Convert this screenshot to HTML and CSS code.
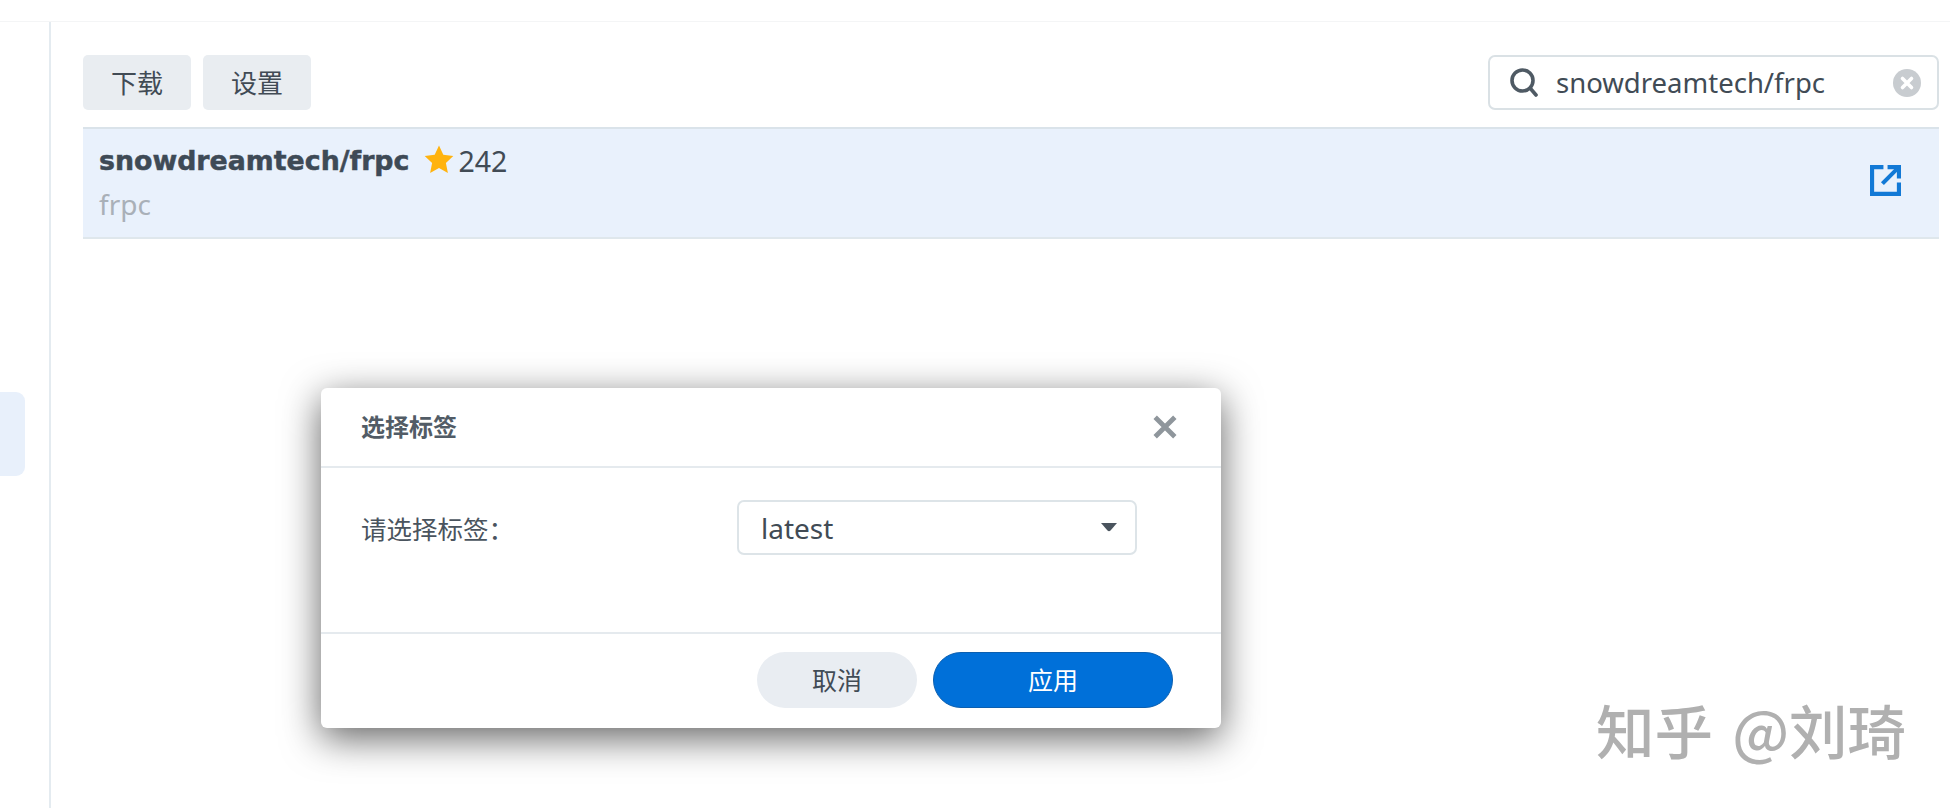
FILE: index.html
```html
<!DOCTYPE html>
<html lang="zh">
<head>
<meta charset="utf-8">
<title>Docker 注册表</title>
<link rel="stylesheet" href="styles.css">
</head>
<body>
<div class="page">
  <div class="topbar"></div>
  <div class="main">
    <aside class="sidebar"><div class="side-tab"></div></aside>
    <section class="content">
      <div class="toolbar">
        <button class="btn">下载</button>
        <button class="btn">设置</button>
        <div class="search">
          <svg class="search-icon" viewBox="0 0 28 30" width="28" height="30"><circle cx="12.5" cy="12.5" r="10.5" fill="none" stroke="#4f5a64" stroke-width="3.6"/><path d="M20 20l6 7" stroke="#4f5a64" stroke-width="3.6" stroke-linecap="round"/></svg>
          <span class="search-text">snowdreamtech/frpc</span>
          <svg class="clear-icon" viewBox="0 0 28 28" width="28" height="28"><circle cx="14" cy="14" r="14" fill="#c8ccd0"/><path d="M9.5 9.5l9 9M18.500 9.5l-9 9" stroke="#fff" stroke-width="3.600" stroke-linecap="round"/></svg>
        </div>
      </div>
      <div class="row">
        <div class="row-main">
          <div class="row-title">
            <span class="repo">snowdreamtech/frpc</span>
            <svg class="star" viewBox="0 0 30 30" width="30" height="30"><path d="M15 1.500l4.300 9.300 10 1.200-7.400 6.900 2 10-8.900-5-8.900 5 2-10L.7 12l10-1.200z" fill="#ffb30f"/></svg>
            <span class="count">242</span>
          </div>
          <div class="row-desc">frpc</div>
        </div>
        <svg class="open-icon" viewBox="0 0 30 30" width="31" height="31"><path d="M13 2H2v26h26V17" fill="none" stroke="#1279d6" stroke-width="4"/><path d="M17 2h11v11" fill="none" stroke="#1279d6" stroke-width="4"/><path d="M26 4L12 18" stroke="#1279d6" stroke-width="4"/></svg>
      </div>
    </section>
  </div>

  <div class="dialog">
    <header class="dialog-head">
      <span class="dialog-title">选择标签</span>
      <svg class="close-icon" viewBox="0 0 22 22" width="24" height="24"><path d="M2 2l18 18M20 2L2 20" stroke="#8f969c" stroke-width="4.400"/></svg>
    </header>
    <div class="dialog-body">
      <label class="field-label">请选择标签：</label>
      <div class="select">
        <span>latest</span>
        <svg class="caret" viewBox="0 0 16 9" width="16" height="9"><path d="M0 0h16l-6.500 7.500q-1.500 1.500-3 0z" fill="#4a545e"/></svg>
      </div>
    </div>
    <footer class="dialog-foot">
      <button class="pill pill-cancel">取消</button>
      <button class="pill pill-apply">应用</button>
    </footer>
  </div>

  <div class="watermark">知乎 @刘琦</div>
</div>
</body>
</html>
```
FILE: styles.css
```css
* { box-sizing: border-box; }
html, body { margin: 0; padding: 0; }
body {
  background: #fff;
  color: #414b55;
  font-family: "Noto Sans", "Noto Sans CJK SC", sans-serif;
  overflow: hidden;
}
.page { position: relative; width: 1950px; height: 808px; overflow: hidden; }
.topbar { height: 22px; border-bottom: 1px solid #f4f5f6; }
.main { display: flex; height: 786px; }
.sidebar { width: 51px; flex: none; border-right: 2px solid #e4ebf0; padding-top: 370px; }
.side-tab { width: 25px; height: 84px; background: #e8f0fb; border-radius: 0 9px 9px 0; }
.content { flex: none; width: 1888px; padding: 33px 0 0 32px; }

.toolbar { display: flex; gap: 12px; height: 55px; margin-bottom: 17px; }
.btn {
  width: 108px; height: 55px; border: 0; border-radius: 5px;
  background: #e9edf1; color: #414b55;
  font: 26px "Noto Sans CJK SC", sans-serif;
  padding: 0 0 3px;
}
.search {
  margin-left: auto; width: 451px; height: 55px;
  display: flex; align-items: center;
  border: 2px solid #dae1e5; border-radius: 7px; background: #fff;
  padding: 0 16px 0 20px;
}
.search-icon { flex: none; }
.search-text { margin-left: 18px; font-size: 27.5px; color: #414b55; flex: 1; }
.clear-icon { flex: none; }

.row {
  display: flex; align-items: center; justify-content: space-between;
  height: 112px; background: #e9f1fc;
  border-top: 2px solid #dae3ea; border-bottom: 2px solid #dfe7ec;
  padding: 0 38px 0 16px;
}
.row-main { display: flex; flex-direction: column; gap: 5px; }
.row-title { display: flex; align-items: center; height: 36px; }
.repo { font: bold 26.8px "DejaVu Sans", sans-serif; color: #3e4a56; -webkit-text-stroke: .5px #3e4a56; }
.star { margin-left: 15px; margin-top: -3px; }
.count { margin-left: 4px; font-size: 28.500px; color: #414b55; }
.row-desc { font-size: 28px; line-height: 40px; color: #a9b0b8; }
.open-icon { margin-top: -5px; }

.dialog {
  position: absolute; left: 321px; top: 388px; width: 900px; height: 340px;
  background: #fff; border-radius: 6px;
  box-shadow: 0 10px 38px rgba(0, 0, 0, .62);
  display: flex; flex-direction: column;
}
.dialog-head {
  height: 80px; flex: none; display: flex; align-items: center; justify-content: space-between;
  border-bottom: 2px solid #e5eaee; padding: 0 44px 0 40px;
}
.dialog-title { font: bold 24px "Noto Sans CJK SC", sans-serif; color: #525c66; margin-top: -4px; }
.dialog-body { flex: 1; display: flex; align-items: flex-start; padding: 32px 0 0 40px; }
.field-label { width: 376px; flex: none; font: 25.5px/55px "Noto Sans CJK SC", sans-serif; color: #4a545e; }
.select {
  width: 400px; height: 55px; display: flex; align-items: center; justify-content: space-between;
  border: 2px solid #dde4e8; border-radius: 7px; padding: 0 18px 0 22px;
  font-size: 28px; color: #414b55;
}
.dialog-foot {
  height: 96px; flex: none; display: flex; justify-content: flex-end; gap: 16px;
  border-top: 2px solid #e5eaee; padding: 18px 48px 0 0;
}
.pill {
  height: 56px; border: 0; border-radius: 28px; padding: 0 0 3px;
  font: 25px "Noto Sans CJK SC", sans-serif;
}
.pill-cancel { width: 160px; background: #e9edf2; color: #414b55; }
.pill-apply { width: 240px; background: #0070d9; color: #fff; border: 1px solid #0b5fb0; }

.watermark {
  position: absolute; left: 1596px; top: 694px;
  font: 500 58.500px/70px "Noto Sans CJK SC", sans-serif;
  word-spacing: 6px;
  color: #b0b0b0; white-space: pre;
  text-shadow: 2px 2px 0 rgba(255,255,255,.85);
}
```
